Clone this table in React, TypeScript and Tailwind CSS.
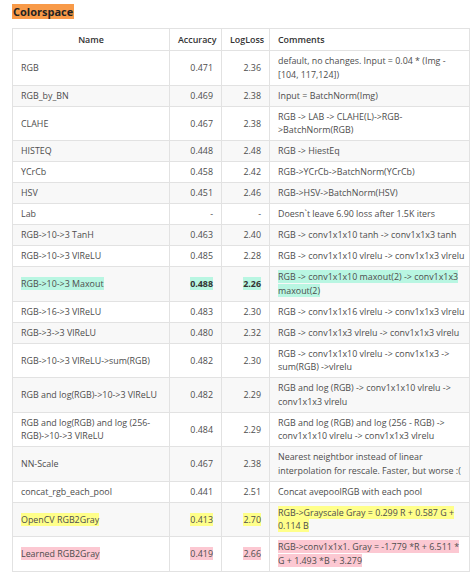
import * as React from "react"

type Hl = "teal" | "yellow" | "pink" | undefined

type Row = {
  name: string[]
  acc: string
  loss: string
  comment: string[]
  hl?: Hl
  bold?: boolean
}

const rows: Row[] = [
  { name: ["RGB"], acc: "0.471", loss: "2.36", comment: ["default, no changes. Input = 0.04 * (Img -", "[104, 117,124])"] },
  { name: ["RGB_by_BN"], acc: "0.469", loss: "2.38", comment: ["Input = BatchNorm(Img)"] },
  { name: ["CLAHE"], acc: "0.467", loss: "2.38", comment: ["RGB -> LAB -> CLAHE(L)->RGB-", ">BatchNorm(RGB)"] },
  { name: ["HISTEQ"], acc: "0.448", loss: "2.48", comment: ["RGB -> HiestEq"] },
  { name: ["YCrCb"], acc: "0.458", loss: "2.42", comment: ["RGB->YCrCb->BatchNorm(YCrCb)"] },
  { name: ["HSV"], acc: "0.451", loss: "2.46", comment: ["RGB->HSV->BatchNorm(HSV)"] },
  { name: ["Lab"], acc: "-", loss: "-", comment: ["Doesn`t leave 6.90 loss after 1.5K iters"] },
  { name: ["RGB->10->3 TanH"], acc: "0.463", loss: "2.40", comment: ["RGB -> conv1x1x10 tanh -> conv1x1x3 tanh"] },
  { name: ["RGB->10->3 VlReLU"], acc: "0.485", loss: "2.28", comment: ["RGB -> conv1x1x10 vlrelu -> conv1x1x3 vlrelu"] },
  {
    name: ["RGB->10->3 Maxout"],
    acc: "0.488",
    loss: "2.26",
    comment: ["RGB -> conv1x1x10 maxout(2) -> conv1x1x3", "maxout(2)"],
    hl: "teal",
    bold: true,
  },
  { name: ["RGB->16->3 VlReLU"], acc: "0.483", loss: "2.30", comment: ["RGB -> conv1x1x16 vlrelu -> conv1x1x3 vlrelu"] },
  { name: ["RGB->3->3 VlReLU"], acc: "0.480", loss: "2.32", comment: ["RGB -> conv1x1x3 vlrelu -> conv1x1x3 vlrelu"] },
  { name: ["RGB->10->3 VlReLU->sum(RGB)"], acc: "0.482", loss: "2.30", comment: ["RGB -> conv1x1x10 vlrelu -> conv1x1x3 ->", "sum(RGB) ->vlrelu"] },
  { name: ["RGB and log(RGB)->10->3 VlReLU"], acc: "0.482", loss: "2.29", comment: ["RGB and log (RGB) -> conv1x1x10 vlrelu ->", "conv1x1x3 vlrelu"] },
  {
    name: ["RGB and log(RGB) and log (256-", "RGB)->10->3 VlReLU"],
    acc: "0.484",
    loss: "2.29",
    comment: ["RGB and log (RGB) and log (256 - RGB) ->", "conv1x1x10 vlrelu -> conv1x1x3 vlrelu"],
  },
  { name: ["NN-Scale"], acc: "0.467", loss: "2.38", comment: ["Nearest neightbor instead of linear", "interpolation for rescale. Faster, but worse :("] },
  { name: ["concat_rgb_each_pool"], acc: "0.441", loss: "2.51", comment: ["Concat avepoolRGB with each pool"] },
  {
    name: ["OpenCV RGB2Gray"],
    acc: "0.413",
    loss: "2.70",
    comment: ["RGB->Grayscale Gray = 0.299 R + 0.587 G +", "0.114 B"],
    hl: "yellow",
  },
  {
    name: ["Learned RGB2Gray"],
    acc: "0.419",
    loss: "2.66",
    comment: ["RGB->conv1x1x1. Gray = -1.779 *R + 6.511 *", "G + 1.493 *B + 3.279"],
    hl: "pink",
  },
]

const hlClass: Record<string, string> = {
  teal: "bg-[#b9f6e2]",
  yellow: "bg-[#ffff8a]",
  pink: "bg-[#fcc8d2]",
}

function Lines({ lines, hl, bold }: { lines: string[]; hl?: Hl; bold?: boolean }) {
  return (
    <>
      {lines.map((l, i) => (
        <React.Fragment key={i}>
          {hl ? (
            <span className={`${hlClass[hl]} ${bold ? "font-bold text-[#333]" : ""}`}>{l}</span>
          ) : (
            <span className={bold ? "font-bold" : ""}>{l}</span>
          )}
          {i < lines.length - 1 && <br />}
        </React.Fragment>
      ))}
    </>
  )
}

const cell = "border border-[#e2e2e2] px-2 py-[3.25px] align-middle"

export default function App() {
  return (
    <div
      className="min-h-screen bg-white px-3 pt-1 text-[8.9px] leading-[13.5px] text-[#4d4d4d]"
      style={{ fontFamily: '"Open Sans", "Noto Sans", sans-serif' }}
    >
      <div>
        <span className="bg-[#f89a48] px-px text-[11px] leading-[15px] font-bold text-[#222]">Colorspace</span>
      </div>
      <table className="mt-2 w-[457px] table-fixed border-collapse">
        <colgroup>
          <col className="w-[157px]" />
          <col className="w-[52px]" />
          <col className="w-[48px]" />
          <col className="w-[200px]" />
        </colgroup>
        <thead>
          <tr className="bg-white text-[#333]">
            <th className="border border-[#e2e2e2] px-2 py-[4px] text-center font-semibold">Name</th>
            <th className="border border-[#e2e2e2] px-2 py-[4px] text-right font-semibold">Accuracy</th>
            <th className="border border-[#e2e2e2] px-2 py-[4px] text-right font-semibold">LogLoss</th>
            <th className="border border-[#e2e2e2] px-2 py-[4px] text-left font-semibold">Comments</th>
          </tr>
        </thead>
        <tbody>
          {rows.map((r, i) => (
            <tr key={i} className={i % 2 === 1 ? "bg-[#f8f8f8]" : "bg-white"}>
              <td className={`${cell} whitespace-nowrap text-left`}>
                <Lines lines={r.name} hl={r.hl} />
              </td>
              <td className={`${cell} text-right`}>
                <Lines lines={[r.acc]} hl={r.hl} bold={r.bold} />
              </td>
              <td className={`${cell} text-right`}>
                <Lines lines={[r.loss]} hl={r.hl} bold={r.bold} />
              </td>
              <td className={`${cell} whitespace-nowrap pr-1 text-left`}>
                <Lines lines={r.comment} hl={r.hl} />
              </td>
            </tr>
          ))}
        </tbody>
      </table>
    </div>
  )
}
